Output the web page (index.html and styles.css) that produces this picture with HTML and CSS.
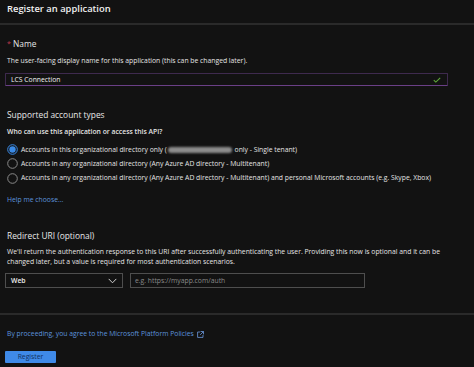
FILE: index.html
```html
<!DOCTYPE html>
<html>
<head>
<meta charset="utf-8">
<link rel="stylesheet" href="styles.css">
</head>
<body>
<div class="page">
  <div class="header"><h1 class="title">Register an application</h1></div>
  <div class="content">
    <div class="label"><span class="req">*</span> Name</div>
    <div class="desc">The user-facing display name for this application (this can be changed later).</div>
    <div class="name-input">
      <span class="value">LCS Connection</span>
      <svg class="check" width="8" height="6" viewBox="0 0 8 6"><path d="M0.8 3.2 L2.8 5.1 L7.2 0.8" fill="none" stroke="#5fa83a" stroke-width="1.1"/></svg>
    </div>

    <h2 class="section">Supported account types</h2>
    <div class="question">Who can use this application or access this API?</div>
    <div class="radios">
      <div class="radio-row">
        <svg class="radio" width="11" height="11" viewBox="0 0 11 11"><circle cx="5.5" cy="5.5" r="4.8" fill="none" stroke="#3a8ae6" stroke-width="1"/><circle cx="5.5" cy="5.5" r="3.2" fill="#3a8ae6"/></svg>
        <span class="opt">Accounts in this organizational directory only (<span class="blur"></span> only - Single tenant)</span>
      </div>
      <div class="radio-row">
        <svg class="radio" width="11" height="11" viewBox="0 0 11 11"><circle cx="5.5" cy="5.5" r="4.8" fill="none" stroke="#8a8a8a" stroke-width="1"/></svg>
        <span class="opt">Accounts in any organizational directory (Any Azure AD directory - Multitenant)</span>
      </div>
      <div class="radio-row">
        <svg class="radio" width="11" height="11" viewBox="0 0 11 11"><circle cx="5.5" cy="5.5" r="4.8" fill="none" stroke="#8a8a8a" stroke-width="1"/></svg>
        <span class="opt">Accounts in any organizational directory (Any Azure AD directory - Multitenant) and personal Microsoft accounts (e.g. Skype, Xbox)</span>
      </div>
    </div>
    <a class="help link">Help me choose...</a>

    <h2 class="section redirect">Redirect URI (optional)</h2>
    <div class="desc2">We'll return the authentication response to this URI after successfully authenticating the user. Providing this now is optional and it can be changed later, but a value is required for most authentication scenarios.</div>
    <div class="uri-row">
      <div class="select">
        <span>Web</span>
        <svg width="9" height="6" viewBox="0 0 9 6"><path d="M0.7 0.9 L4.5 4.8 L8.3 0.9" fill="none" stroke="#cfcfcf" stroke-width="1"/></svg>
      </div>
      <div class="uri-input">e.g. https://myapp.com/auth</div>
    </div>
  </div>
  <div class="footer">
    <div class="policies link">By proceeding, you agree to the Microsoft Platform Policies
      <svg class="ext" width="7" height="7" viewBox="0 0 7 7"><path d="M3 1 H0.6 V6.4 H6 V4" fill="none" stroke="#6d9be0" stroke-width="0.8"/><path d="M3.6 0.5 H6.5 V3.4 M6.5 0.5 L3.2 3.8" fill="none" stroke="#6d9be0" stroke-width="0.8"/></svg>
    </div>
    <button class="register">Register</button>
  </div>
</div>
</body>
</html>
```

FILE: styles.css
```css
* { box-sizing: border-box; }
html, body { margin: 0; padding: 0; background: #121212; }
body {
  font-family: "Open Sans", "Noto Sans", sans-serif;
  color: #e4e4e4;
  width: 474px;
  height: 367px;
  overflow: hidden;
}
.header {
  height: 25px;
  border-bottom: 2px solid #2a2a2a;
  padding-left: 7px;
}
.title {
  margin: 0;
  font-size: 9.4px;
  line-height: 17px;
  font-weight: 600;
  color: #f0f0f0;
}
.content { padding: 0 5px; }
.label {
  margin-top: 12px;
  font-size: 8.4px;
  line-height: 14px;
  padding-left: 2px;
}
.req { color: #c0394d; font-size: 7px; vertical-align: top; }
.desc {
  margin-top: 5px;
  font-size: 6.8px;
  line-height: 10px;
  padding-left: 2px;
}
.name-input {
  margin-top: 7px;
  width: 443px;
  height: 13px;
  border: 1px solid #3e2a4e;
  border-bottom-color: #6a3f86;
  border-radius: 1px;
  display: flex;
  align-items: center;
  justify-content: space-between;
  padding: 0 6px 0 5px;
  font-size: 6.8px;
  color: #f2f2f2;
}
.section {
  margin: 22px 0 0 2px;
  font-size: 8.4px;
  line-height: 13px;
  font-weight: 400;
  color: #e8e8e8;
}
.question {
  margin-top: 6px;
  padding-left: 2px;
  font-size: 6.8px;
  line-height: 10px;
  font-weight: 600;
}
.radios { margin-top: 5.5px; }
.radio-row {
  height: 14.3px;
  display: flex;
  align-items: center;
  gap: 3px;
  padding-left: 2px;
}
.radio { flex: none; }
.opt { font-size: 6.8px; line-height: 10px; display: inline-flex; align-items: center; white-space: pre; }
.blur {
  display: inline-block;
  width: 64px;
  height: 6px;
  border-radius: 3px;
  background: #8c8c8c;
  filter: blur(1.3px);
  margin: 0 1px 0 1px;
}
.link { color: #5d93dc; }
.help {
  display: block;
  margin-top: 10px;
  padding-left: 2px;
  font-size: 6.8px;
  line-height: 10px;
}
.section.redirect { margin-top: 23.5px; }
.desc2 {
  margin-top: 5.5px;
  padding-left: 2px;
  width: 442px;
  font-size: 6.8px;
  line-height: 10px;
}
.uri-row {
  margin-top: 5.5px;
  display: flex;
  gap: 7px;
}
.select {
  width: 118px;
  height: 15.5px;
  border: 1px solid #4e4e4e;
  display: flex;
  align-items: center;
  justify-content: space-between;
  padding: 0 5px 0 5px;
  font-size: 6.8px;
  font-weight: 600;
  color: #f0f0f0;
}
.uri-input {
  width: 235px;
  height: 15.5px;
  border: 1px solid #4e4e4e;
  display: flex;
  align-items: center;
  padding-left: 4px;
  font-size: 6.8px;
  color: #8a8a8a;
}
.footer {
  margin-top: 24.5px;
  border-top: 2px solid #2a2a2a;
  padding: 14.5px 5px 0;
}
.policies {
  padding-left: 2px;
  font-size: 6.8px;
  line-height: 10px;
  display: flex;
  align-items: center;
  gap: 3px;
}
.register {
  margin-top: 11.5px;
  width: 51px;
  height: 12.5px;
  padding: 0;
  border: none;
  border-radius: 1px;
  background: #3f8ae8;
  color: #10315e;
  font-family: inherit;
  font-size: 6.8px;
  line-height: 12px;
}
```
